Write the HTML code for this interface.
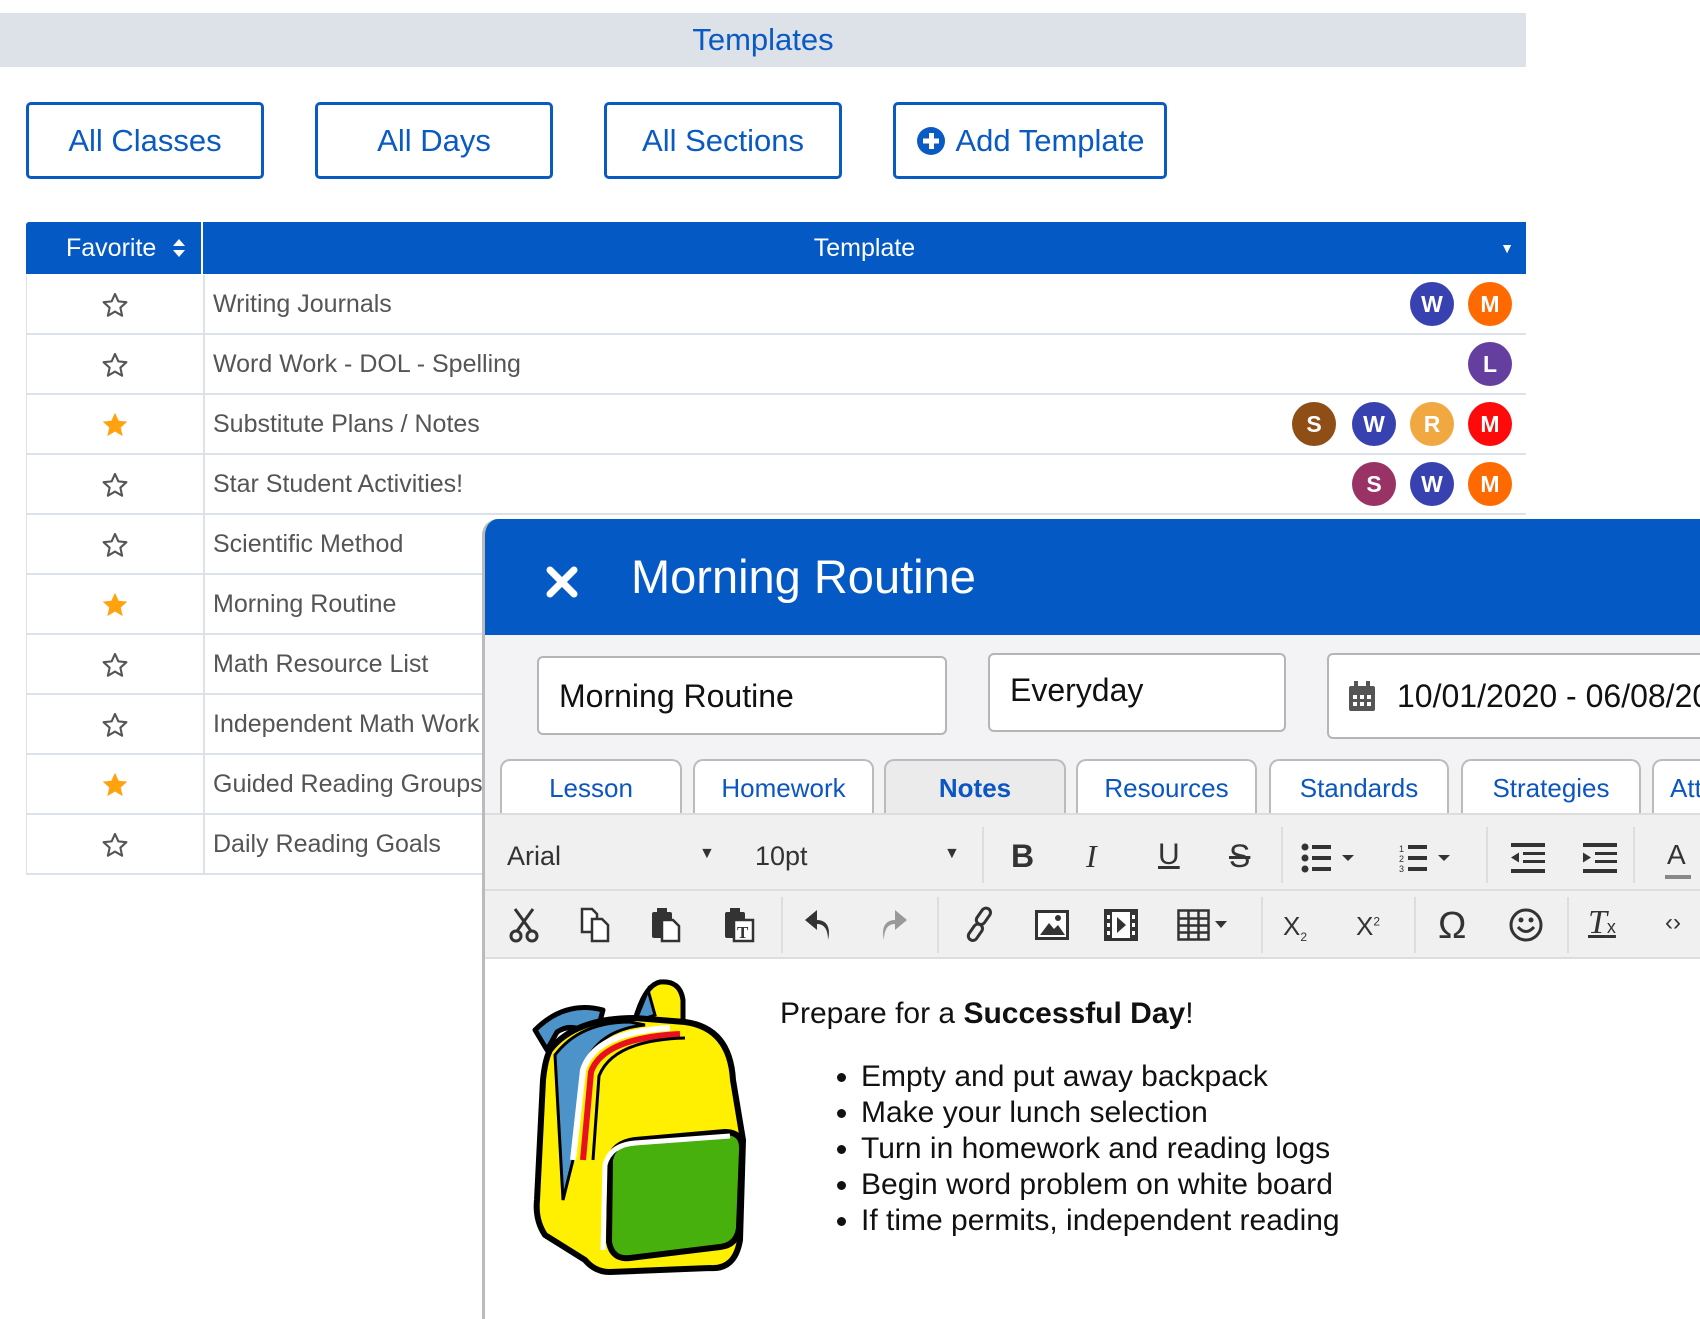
<!DOCTYPE html>
<html><head><meta charset="utf-8"><style>
*{box-sizing:border-box;margin:0;padding:0}
body{width:1700px;height:1300px;background:#fff;position:relative;overflow:hidden;font-family:"Liberation Sans",Arial,sans-serif}
.abs{position:absolute}
.hdr{left:0;top:13px;width:1526px;height:54px;background:#dde1e8;color:#0a5ac4;font-size:31px;text-align:center;line-height:54px}
.btn{top:102px;height:77px;border:3px solid #0a5ac4;border-radius:5px;color:#0a5ac4;font-size:31px;display:flex;align-items:center;justify-content:center;background:#fff}
.th{top:222px;height:52px;background:#0459c4;color:#fff;font-size:25px;line-height:52px}
.row{left:26px;width:1500px;height:60px;border-bottom:2px solid #dde1ea;border-left:1px solid #dde1ea}
.row .c1{position:absolute;left:176px;top:0;bottom:-2px;border-left:2px solid #dde1ea}
.row .t{position:absolute;left:186px;top:0;line-height:58px;font-size:25px;color:#555}
.row svg.st{position:absolute;left:74px;top:16px}
.bd{position:absolute;width:44px;height:44px;border-radius:50%;color:#fff;font-weight:bold;font-size:23px;text-align:center;line-height:44px;top:7px}
.modal{left:482px;top:519px;width:1300px;height:800px;background:#fff;border-left:3px solid #bbb;border-top-left-radius:16px;overflow:hidden}
.mh{position:absolute;left:0;top:0;right:0;height:116px;background:#0459c4}
.inp{position:absolute;background:#fff;border:2px solid #b5b5b5;border-radius:6px;font-size:32px;color:#111}
.tab{position:absolute;top:240px;height:56px;border:2px solid #bbb;border-bottom:none;border-radius:10px 10px 0 0;background:#fff;color:#0b56c0;font-size:26px;text-align:center;line-height:54px}
.tb{position:absolute;left:0;right:0;background:#f0f0f0;border-top:2px solid #ddd}
.sep{position:absolute;width:2px;background:#ddd}
.ic{position:absolute;font-size:28px;color:#333}
</style></head><body>
<div class="abs hdr">Templates</div>
<div class="abs btn" style="left:26px;width:238px">All Classes</div>
<div class="abs btn" style="left:315px;width:238px">All Days</div>
<div class="abs btn" style="left:604px;width:238px">All Sections</div>
<div class="abs btn" style="left:893px;width:274px"><svg width="30" height="30" viewBox="0 0 30 30" style="margin-right:10px"><circle cx="15" cy="15" r="14" fill="#0a5ac4"/><rect x="13" y="7" width="5" height="16" fill="#fff"/><rect x="7" y="12.5" width="16" height="5" fill="#fff"/></svg>Add Template</div>

<div class="abs th" style="left:26px;width:175px;text-align:left;padding-left:40px;border-top-left-radius:3px">Favorite</div>
<svg class="abs" style="left:172px;top:238px" width="14" height="20" viewBox="0 0 14 20"><path d="M7 1l6 7H1zM7 19l6-7H1z" fill="#fff"/></svg>
<div class="abs th" style="left:203px;width:1323px;text-align:center">Template<span style="position:absolute;right:12px;font-size:14px">&#9660;</span></div>

<div id="rows"></div>
<script>
var rows=[["Writing Journals",0,[["W","#3841b0"],["M","#ff6a00"]]],["Word Work - DOL - Spelling",0,[["L","#653f9f"]]],["Substitute Plans / Notes",1,[["S","#8f4e16"],["W","#3841b0"],["R","#f2a840"],["M","#ff0a0a"]]],["Star Student Activities!",0,[["S","#993366"],["W","#3841b0"],["M","#ff6a00"]]],["Scientific Method",0,[]],["Morning Routine",1,[]],["Math Resource List",0,[]],["Independent Math Work",0,[]],["Guided Reading Groups",1,[]],["Daily Reading Goals",0,[]]];
var h="";rows.forEach(function(r,i){var y=275+i*60;h+='<div class="abs row" style="top:'+y+'px"><div class="c1"></div>';
h+=r[1]?'<svg class="st" width="28" height="28" viewBox="0 0 24 24"><path d="M12 1.5l3.1 6.9 7.4.7-5.6 5 1.7 7.4L12 17.6l-6.6 3.9 1.7-7.4-5.6-5 7.4-.7z" fill="#ffa20d"/></svg>':'<svg class="st" width="28" height="28" viewBox="0 0 24 24"><path d="M12 2.5l2.9 6.4 6.9.7-5.2 4.7 1.5 6.9L12 17.6l-6.1 3.6 1.5-6.9-5.2-4.7 6.9-.7z" fill="none" stroke="#555" stroke-width="1.8" stroke-linejoin="round"/></svg>';
h+='<div class="t">'+r[0]+'</div>';var n=r[2].length;r[2].forEach(function(b,j){var cx=[1489,1431,1373,1313][n-1-j];h+='<div class="bd" style="left:'+(cx-26-22)+'px;background:'+b[1]+'">'+b[0]+'</div>'});h+='</div>'});
document.getElementById("rows").innerHTML=h;
</script>

<div class="abs modal">
 <div class="mh">
  <svg class="abs" style="left:60px;top:46px" width="34" height="34" viewBox="0 0 34 34"><path d="M5 5L29 29M29 5L5 29" stroke="#fff" stroke-width="7" stroke-linecap="round"/></svg>
  <div class="abs" style="left:146px;top:30px;color:#fff;font-size:47px">Morning Routine</div>
 </div>
 <div class="abs" style="left:0;right:0;top:116px;height:180px;background:#f3f3f5"></div>
 <div class="inp" style="left:52px;top:137px;width:410px;height:79px;line-height:77px;padding-left:20px">Morning Routine</div>
 <div class="inp" style="left:503px;top:134px;width:298px;height:79px;line-height:70px;padding-left:20px">Everyday</div>
 <div class="inp" style="left:842px;top:134px;width:500px;height:86px;line-height:82px;padding-left:68px">10/01/2020 - 06/08/2021
  <svg class="abs" style="left:20px;top:26px" width="26" height="30" viewBox="0 0 26 30"><rect x="0" y="5" width="26" height="25" rx="2" fill="#555"/><rect x="5" y="0" width="4" height="8" fill="#555"/><rect x="17" y="0" width="4" height="8" fill="#555"/><g fill="#fff"><rect x="4" y="14" width="4" height="4"/><rect x="11" y="14" width="4" height="4"/><rect x="18" y="14" width="4" height="4"/><rect x="4" y="21" width="4" height="4"/><rect x="11" y="21" width="4" height="4"/><rect x="18" y="21" width="4" height="4"/></g></svg></div>
 <div class="tab" style="left:15px;width:182px">Lesson</div>
 <div class="tab" style="left:208px;width:181px">Homework</div>
 <div class="tab" style="left:399px;width:182px;background:#ebebeb;font-weight:bold">Notes</div>
 <div class="tab" style="left:591px;width:181px">Resources</div>
 <div class="tab" style="left:784px;width:180px">Standards</div>
 <div class="tab" style="left:976px;width:180px">Strategies</div>
 <div class="tab" style="left:1167px;width:180px;text-align:left;padding-left:16px">Attachments</div>

 <div class="tb" style="top:294px;height:76px"></div>
 <div class="tb" style="top:370px;height:70px"></div>
 <div class="abs" style="left:0;right:0;top:438px;height:2px;background:#ddd"></div>
 <div class="ic" style="left:22px;top:322px;font-size:27px">Arial</div>
 <div class="ic" style="left:214px;top:326px;font-size:16px">&#9660;</div>
 <div class="ic" style="left:270px;top:322px;font-size:27px">10pt</div>
 <div class="ic" style="left:459px;top:326px;font-size:16px">&#9660;</div>
 <div class="sep" style="left:497px;top:308px;height:56px"></div>
 <div class="ic" style="left:526px;top:319px;font-weight:bold;font-size:32px">B</div>
 <div class="ic" style="left:601px;top:319px;font-style:italic;font-size:32px;font-family:'Liberation Serif',serif">I</div>
 <div class="ic" style="left:673px;top:319px;text-decoration:underline;font-size:30px">U</div>
 <div class="ic" style="left:744px;top:319px;text-decoration:line-through;font-size:32px">S</div>
 <div class="sep" style="left:796px;top:308px;height:56px"></div>
 <svg class="abs" style="left:816px;top:324px" width="60" height="30"><g fill="#333"><circle cx="4" cy="4" r="3.5"/><circle cx="4" cy="15" r="3.5"/><circle cx="4" cy="26" r="3.5"/><rect x="11" y="2" width="19" height="4"/><rect x="11" y="13" width="19" height="4"/><rect x="11" y="24" width="19" height="4"/><path d="M41 12h12l-6 6z"/></g></svg>
 <svg class="abs" style="left:914px;top:324px" width="60" height="30"><g fill="#333"><text x="0" y="9" font-size="9" font-family="Liberation Sans">1</text><text x="0" y="19" font-size="9" font-family="Liberation Sans">2</text><text x="0" y="29" font-size="9" font-family="Liberation Sans">3</text><rect x="9" y="2" width="19" height="4"/><rect x="9" y="13" width="19" height="4"/><rect x="9" y="24" width="19" height="4"/><path d="M39 12h12l-6 6z"/></g></svg>
 <div class="sep" style="left:1001px;top:308px;height:56px"></div>
 <svg class="abs" style="left:1026px;top:324px" width="34" height="30"><g fill="#333"><rect x="0" y="0" width="34" height="4"/><rect x="12" y="9" width="22" height="3"/><rect x="12" y="17" width="22" height="3"/><rect x="0" y="26" width="34" height="4"/><path d="M0 14.5l8-5v10z"/></g></svg>
 <svg class="abs" style="left:1098px;top:324px" width="34" height="30"><g fill="#333"><rect x="0" y="0" width="34" height="4"/><rect x="12" y="9" width="22" height="3"/><rect x="12" y="17" width="22" height="3"/><rect x="0" y="26" width="34" height="4"/><path d="M8 14.5l-8-5v10z"/></g></svg>
 <div class="sep" style="left:1148px;top:308px;height:56px"></div>
 <div class="ic" style="left:1182px;top:320px;font-size:28px">A</div>
 <div class="abs" style="left:1180px;top:356px;width:26px;height:4px;background:#888"></div>

 <svg class="abs" style="left:24px;top:388px" width="30" height="36" viewBox="0 0 30 36"><g stroke="#333" stroke-width="3" fill="none"><path d="M6 2L22 24M24 2L8 24"/><circle cx="7" cy="29" r="5"/><circle cx="23" cy="29" r="5"/></g></svg>
 <svg class="abs" style="left:95px;top:388px" width="32" height="36" viewBox="0 0 32 36"><g stroke="#333" stroke-width="2.5" fill="#fff"><path d="M2 2h10l5 5v18H2z"/><path d="M12 12h10l6 6v16H12z"/></g></svg>
 <svg class="abs" style="left:165px;top:388px" width="32" height="36" viewBox="0 0 32 36"><g fill="#333"><rect x="2" y="5" width="20" height="26" rx="2"/><rect x="7" y="1" width="10" height="6"/></g><path d="M12 13h11l6 6v15H12z" fill="#fff" stroke="#333" stroke-width="2.5"/></svg>
 <svg class="abs" style="left:238px;top:388px" width="32" height="36" viewBox="0 0 32 36"><g fill="#333"><rect x="2" y="5" width="20" height="26" rx="2"/><rect x="7" y="1" width="10" height="6"/></g><rect x="11" y="13" width="19" height="21" fill="#fff" stroke="#333" stroke-width="2.5"/><text x="14" y="31" font-size="17" font-weight="bold" font-family="Liberation Serif" fill="#333">T</text></svg>
 <div class="sep" style="left:296px;top:378px;height:56px"></div>
 <svg class="abs" style="left:318px;top:388px" width="30" height="36" viewBox="0 0 30 36"><path d="M14 3L2 13l12 10v-6c7 0 11 5 11 16 3-12-1-20-11-20z" fill="#333"/></svg>
 <svg class="abs" style="left:394px;top:388px" width="30" height="36" viewBox="0 0 30 36"><path d="M16 3l12 10-12 10v-6C9 17 5 22 5 33 2 21 6 13 16 13z" fill="#999"/></svg>
 <div class="sep" style="left:452px;top:378px;height:56px"></div>
 <svg class="abs" style="left:478px;top:386px" width="34" height="40" viewBox="0 0 34 40"><g stroke="#333" stroke-width="3" fill="none"><rect x="16" y="2" width="9" height="18" rx="4.5" transform="rotate(35 20 11)"/><rect x="8" y="18" width="9" height="18" rx="4.5" transform="rotate(35 12 27)"/></g></svg>
 <svg class="abs" style="left:550px;top:391px" width="34" height="30" viewBox="0 0 34 30"><rect x="1.5" y="1.5" width="31" height="27" fill="#fff" stroke="#333" stroke-width="3"/><path d="M5 25l9-12 5 6 4-4 7 10z" fill="#333"/><circle cx="23" cy="8" r="3" fill="#333"/></svg>
 <svg class="abs" style="left:619px;top:390px" width="34" height="32" viewBox="0 0 34 32"><rect x="1.5" y="1.5" width="31" height="29" fill="#fff" stroke="#333" stroke-width="3"/><g fill="#333"><rect x="1" y="1" width="7" height="30"/><rect x="26" y="1" width="7" height="30"/><path d="M13 8l9 8-9 8z"/></g><g fill="#fff"><rect x="3" y="6" width="3" height="4"/><rect x="3" y="14" width="3" height="4"/><rect x="3" y="22" width="3" height="4"/><rect x="28" y="6" width="3" height="4"/><rect x="28" y="14" width="3" height="4"/><rect x="28" y="22" width="3" height="4"/></g></svg>
 <svg class="abs" style="left:692px;top:390px" width="52" height="32" viewBox="0 0 52 32"><g stroke="#333" stroke-width="2.5" fill="none"><rect x="1.5" y="1.5" width="30" height="29"/><path d="M1.5 9.5h30M1.5 16.5h30M1.5 23.5h30M11.5 1.5v29M21.5 1.5v29"/></g><path d="M38 12h12l-6 7z" fill="#333"/></svg>
 <div class="sep" style="left:776px;top:378px;height:56px"></div>
 <div class="ic" style="left:798px;top:392px;font-size:26px">X<sub style="font-size:12px">2</sub></div>
 <div class="ic" style="left:871px;top:392px;font-size:26px">X<sup style="font-size:12px">2</sup></div>
 <div class="sep" style="left:929px;top:378px;height:56px"></div>
 <div class="ic" style="left:953px;top:386px;font-size:38px">&#937;</div>
 <svg class="abs" style="left:1024px;top:389px" width="34" height="34" viewBox="0 0 34 34"><circle cx="17" cy="17" r="15" fill="none" stroke="#333" stroke-width="3"/><circle cx="12" cy="12" r="2.5" fill="#333"/><circle cx="22" cy="12" r="2.5" fill="#333"/><path d="M9 19q8 9 16 0" fill="none" stroke="#333" stroke-width="3"/></svg>
 <div class="sep" style="left:1082px;top:378px;height:56px"></div>
 <div class="ic" style="left:1103px;top:385px;font-size:34px;font-style:italic;font-family:'Liberation Serif',serif;text-decoration:underline">T<span style="font-size:18px;font-style:normal;font-family:'Liberation Sans'">x</span></div>
 <div class="ic" style="left:1180px;top:390px;font-size:24px">&lsaquo;&rsaquo;</div>

 <svg class="abs" style="left:45px;top:456px" width="220" height="300" viewBox="45 15 220 300">
  <path d="M50 70 Q80 40 118 50 L110 80 Q90 60 72 72 L62 90 Z" fill="#4b93c9" stroke="#000" stroke-width="5" stroke-linejoin="round"/>
  <path d="M150 60 Q160 25 175 22 Q195 20 198 40 L198 70 L160 70 Z" fill="#ffef00" stroke="#000" stroke-width="5"/>
  <path d="M150 62 L163 30 L170 55 Z" fill="#4b93c9" stroke="#000" stroke-width="3"/>
  <path d="M65 90 Q90 58 150 58 L200 62 Q245 68 248 120 L258 180 L255 280 Q250 310 225 308 L125 312 Q110 312 100 300 L60 275 Q50 260 52 240 L58 120 Q60 100 65 90 Z" fill="#ffef00" stroke="#000" stroke-width="6" stroke-linejoin="round"/>
  <path d="M70 95 Q95 62 145 62 L160 65 Q110 70 98 110 L88 200 L78 240 Z" fill="#4b93c9" stroke="#000" stroke-width="3"/>
  <path d="M88 200 L98 110 Q110 72 185 68" fill="none" stroke="#fff" stroke-width="6"/>
  <path d="M98 200 L106 112 Q118 78 195 74" fill="none" stroke="#e8101e" stroke-width="6"/>
  <path d="M108 200 L114 116 Q128 80 200 78" fill="none" stroke="#000" stroke-width="3"/>
  <path d="M125 200 Q128 183 150 180 L240 172 Q258 172 257 190 L254 268 Q252 285 235 287 L145 298 Q127 300 124 282 Z" fill="#47b00d" stroke="#000" stroke-width="6" stroke-linejoin="round"/>
  <path d="M118 290 L120 205 Q125 185 150 183 L245 176" fill="none" stroke="#fff" stroke-width="5"/>
 </svg>
 <div class="abs" style="left:295px;top:478px;font-size:30px;color:#111">Prepare for a <b>Successful Day</b>!</div>
 <ul class="abs" style="left:376px;top:540px;font-size:30px;color:#111;line-height:36px;list-style:disc">
  <li>Empty and put away backpack</li>
  <li>Make your lunch selection</li>
  <li>Turn in homework and reading logs</li>
  <li>Begin word problem on white board</li>
  <li>If time permits, independent reading</li>
 </ul>
</div>
</body></html>
